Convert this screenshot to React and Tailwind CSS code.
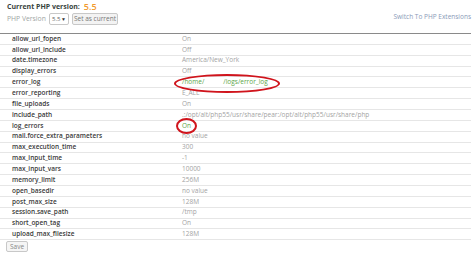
import React from 'react';

const rows = [
  ['allow_url_fopen', 'On'],
  ['allow_url_include', 'Off'],
  ['date.timezone', 'America/New_York'],
  ['display_errors', 'Off'],
  ['error_log', 'errorlog'],
  ['error_reporting', 'E_ALL'],
  ['file_uploads', 'On'],
  ['include_path', '.:/opt/alt/php55/usr/share/pear:/opt/alt/php55/usr/share/php'],
  ['log_errors', 'On', 'green'],
  ['mail.force_extra_parameters', 'no value'],
  ['max_execution_time', '300'],
  ['max_input_time', '-1'],
  ['max_input_vars', '10000'],
  ['memory_limit', '256M'],
  ['open_basedir', 'no value'],
  ['post_max_size', '128M'],
  ['session.save_path', '/tmp'],
  ['short_open_tag', 'On'],
  ['upload_max_filesize', '128M'],
];

export default function App() {
  return (
    <div className="w-[474px] h-[253px] bg-white overflow-hidden relative text-[6.5px] leading-none" style={{ fontFamily: '"Open Sans", "Liberation Sans", sans-serif' }}>
      {/* header */}
      <div className="h-[33px] flex items-start justify-between pr-[3px]">
        <div className="pl-[7px]">
          <div className="flex items-center gap-[4px] h-[12px]">
            <span className="font-bold text-[7px] text-[#38443d]">Current PHP version:</span>
            <span className="font-semibold text-[9px] text-[#f29a2e]">5.5</span>
          </div>
          <div className="flex items-center mt-[1px] h-[12px]">
            <span className="text-[#a0a6a3] text-[6.8px] w-[42px]">PHP Version</span>
            <div className="w-[20px] h-[12px] border border-[#c8c8c8] rounded-[2px] flex items-center justify-between px-[2px] text-[6px] text-[#666]">
              <span>5.5</span>
              <span className="text-[5px] text-[#333]">▼</span>
            </div>
            <div className="ml-[3px] w-[46px] h-[12px] border border-[#c8c8c8] rounded-[2px] bg-[#f3f3f3] flex items-center justify-center text-[6.5px] text-[#777]">Set as current</div>
          </div>
        </div>
        <div className="mt-[14px] text-[6.5px] text-[#8a9ab8]">Switch To PHP Extensions</div>
      </div>

      {/* table */}
      <div className="w-[471px] border-t border-[#8a8a8a]">
        {rows.map(([k, v, c]) => (
          <div key={k} className="flex items-center h-[10.86px] border-b border-[#e6e6e6]">
            <div className="w-[182px] pl-[12px] font-semibold text-[#3a3a3a]">{k}</div>
            <div className={c === 'green' ? 'text-[#5ca64a] whitespace-nowrap' : 'text-[#a3a3a3] whitespace-nowrap'}>
              {v === 'errorlog' ? (
                <span className="text-[#5ca64a]">/home/<span className="inline-block w-[19px]"></span>/logs/error_log</span>
              ) : v}
            </div>
          </div>
        ))}
      </div>

      <div className="pl-[6px] pt-[1px]">
        <div className="w-[22px] h-[11px] border border-[#c8c8c8] rounded-[2px] bg-[#f5f5f5] flex items-center justify-center text-[6.5px] text-[#888]">Save</div>
      </div>

      {/* red annotation ellipses */}
      <div className="absolute left-[174px] top-[74px] w-[106px] h-[19px] border-2 border-[#d0141c] rounded-[50%]"></div>
      <div className="absolute left-[176px] top-[118px] w-[21px] h-[16px] border-2 border-[#d0141c] rounded-[50%]"></div>
    </div>
  );
}
